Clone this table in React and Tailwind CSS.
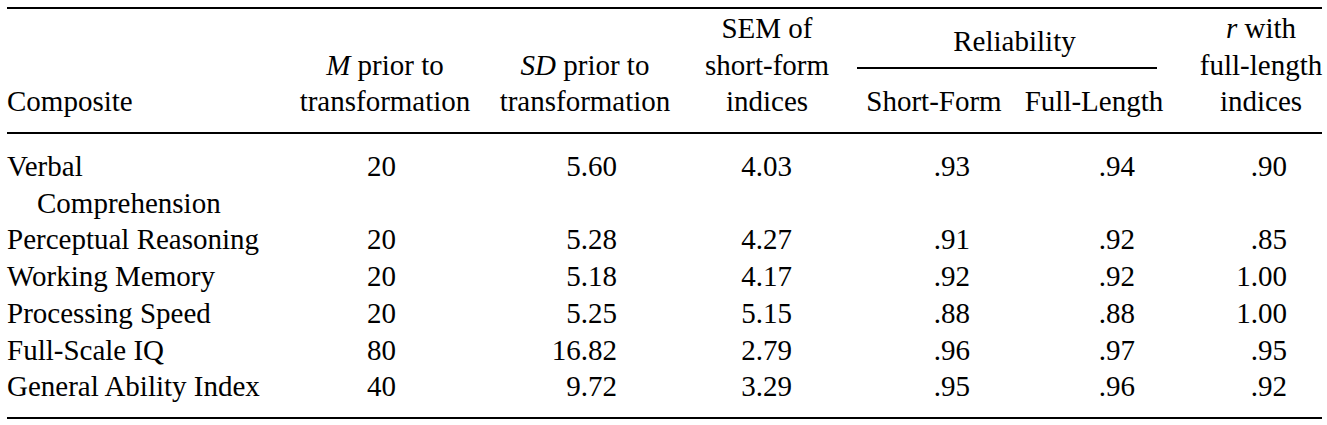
const cols = 'grid grid-cols-[278px_200px_200px_164px_170px_181px_122px]'

const rows = [
  { name: ['Verbal', 'Comprehension'], m: '20', sd: '5.60', sem: '4.03', sf: '.93', fl: '.94', r: '.90' },
  { name: ['Perceptual Reasoning'], m: '20', sd: '5.28', sem: '4.27', sf: '.91', fl: '.92', r: '.85' },
  { name: ['Working Memory'], m: '20', sd: '5.18', sem: '4.17', sf: '.92', fl: '.92', r: '1.00' },
  { name: ['Processing Speed'], m: '20', sd: '5.25', sem: '5.15', sf: '.88', fl: '.88', r: '1.00' },
  { name: ['Full-Scale IQ'], m: '80', sd: '16.82', sem: '2.79', sf: '.96', fl: '.97', r: '.95' },
  { name: ['General Ability Index'], m: '40', sd: '9.72', sem: '3.29', sf: '.95', fl: '.96', r: '.92' },
]

export default function App() {
  return (
    <div className="min-h-screen w-full bg-white pt-[7px]">
      <div className="ml-[7px] w-[1315px] border-t-2 border-b-2 border-black text-black whitespace-nowrap font-['Liberation_Serif',serif] text-[29px] leading-[36.7px]">
        {/* Header */}
        <div className={`${cols} grid-rows-[36.7px_36.7px_36.7px] pt-[1px] pb-[12px] border-b-2 border-black`}>
          <div className="row-span-3 self-end">Composite</div>
          <div className="row-span-3 self-end text-center">
            <i>M</i> prior to<br />transformation
          </div>
          <div className="row-span-3 self-end text-center">
            <i>SD</i> prior to<br />transformation
          </div>
          <div className="row-span-3 self-end text-center">
            SEM of<br />short-form<br />indices
          </div>
          <div className="col-span-2 row-span-2 flex flex-col justify-end pb-[14px]">
            <div className="text-center pr-[20px]">Reliability</div>
            <div className="mt-[8px] h-[2px] bg-black ml-[8px] mr-[43px]" />
          </div>
          <div className="row-span-3 self-end flex flex-col items-center">
            <span><i>r</i> with</span>
            <span>full-length</span>
            <span>indices</span>
          </div>
          <div className="col-start-5 row-start-3 text-center">Short-Form</div>
          <div className="col-start-6 row-start-3 text-center pr-[31px]">Full-Length</div>
        </div>

        {/* Body */}
        <div className="pt-[14px] pb-[12px]">
          {rows.map((row) => (
            <div key={row.name[0]} className={cols}>
              <div>
                {row.name.map((n, i) => (
                  <div key={n} className={i > 0 ? 'pl-[30px]' : ''}>{n}</div>
                ))}
              </div>
              <div className="text-right pr-[89px]">{row.m}</div>
              <div className="text-right pr-[68px]">{row.sd}</div>
              <div className="text-right pr-[57px]">{row.sem}</div>
              <div className="text-right pr-[49px]">{row.sf}</div>
              <div className="text-right pr-[65px]">{row.fl}</div>
              <div className="text-right pr-[35px]">{row.r}</div>
            </div>
          ))}
        </div>
      </div>
    </div>
  )
}
